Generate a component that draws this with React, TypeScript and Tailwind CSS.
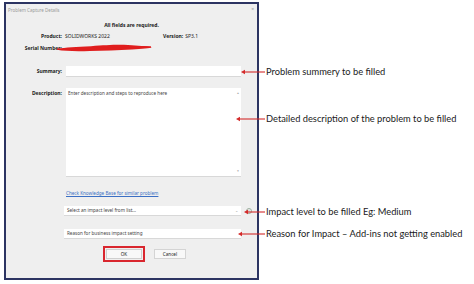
const notes = [
  { top: 66, head: 241, text: 'Problem summery to be filled' },
  { top: 113, head: 236, text: 'Detailed description of the problem to be filled' },
  { top: 206, head: 244, text: 'Impact level to be filled Eg: Medium' },
  { top: 228, head: 238, text: 'Reason for Impact \u2013 Add-ins not getting enabled' },
]

function Arrow({ from }: { from: number }) {
  const len = 265 - from
  return (
    <svg width={len} height="6" viewBox={`0 0 ${len} 6`} className="flex-shrink-0">
      <line x1="2" y1="3" x2={len} y2="3" stroke="#d42a2a" strokeWidth="1.1" />
      <path d="M0 3 L4 0.8 L4 5.2 Z" fill="#d42a2a" />
    </svg>
  )
}

export default function App() {
  return (
    <div className="relative w-[474px] h-[284px] bg-white overflow-hidden"
         style={{ fontFamily: '"Noto Sans", "Open Sans", sans-serif' }}>

      {/* Dialog */}
      <div className="ml-[4px] mt-[2px] w-[255px] h-[278px] border-2 border-[#2c3462]
                      bg-[#efefef] flex flex-col text-[#222]">

        {/* Title bar */}
        <div className="h-[12px] flex items-center justify-between pl-[2px] pr-[3px]">
          <span className="text-[4.5px] text-[#9a9a9a]">Problem Capture Details</span>
          <span className="text-[5px] text-[#9a9a9a]">×</span>
        </div>

        <p className="mt-[5px] text-center text-[5px] font-bold leading-[8px]">
          All fields are required.
        </p>

        {/* Product / Version */}
        <div className="mt-[4px] flex items-center h-[8px] text-[5px]">
          <span className="w-[56px] text-right font-bold">Product:</span>
          <span className="ml-[3px] w-[98px]">SOLIDWORKS 2022</span>
          <span className="font-bold">Version:</span>
          <span className="ml-[2px]">SP3.1</span>
        </div>

        {/* Serial */}
        <div className="mt-[4px] flex items-center h-[8px] text-[5px] relative">
          <span className="w-[56px] text-right font-bold">Serial Number:</span>
          <svg className="absolute left-[50px] top-[-3px]" width="100" height="12" viewBox="0 0 100 12">
            <path d="M1 6.5 C10 5.5 20 5 35 4.2 C50 3.2 60 2.5 72 3 C82 3.4 90 4.5 96 5.2
                     C94 6.2 86 7 76 7.4 C62 8 48 8.6 34 9 C20 9.4 9 9.2 1 7.8 Z"
                  fill="#e01e1e" />
            <path d="M40 5 C55 4 70 4.5 95 5" stroke="#e01e1e" strokeWidth="1.4" fill="none" />
          </svg>
        </div>

        {/* Summary */}
        <div className="mt-[13px] flex items-center">
          <span className="w-[56px] text-right text-[5px] font-bold">Summary:</span>
          <div className="ml-[4px] w-[175px] h-[11px] bg-white border-b border-[#d8d8d8]" />
        </div>

        {/* Description */}
        <div className="mt-[11px] flex items-start">
          <span className="w-[56px] text-right text-[5px] font-bold mt-[2px]">Description:</span>
          <div className="ml-[4px] w-[175px] h-[89px] bg-white border-b border-[#d8d8d8] flex">
            <span className="flex-1 pl-[2px] pt-[2px] text-[4.6px] text-[#444]">
              Enter description and steps to reproduce here
            </span>
            <div className="w-[6px] flex flex-col justify-between items-center py-[3px] text-[3px] text-[#aaa]">
              <span>▲</span>
              <span>▼</span>
            </div>
          </div>
        </div>

        {/* Link */}
        <p className="mt-[13px] ml-[60px] text-[4.6px] text-[#3b6fc4] underline leading-[6px]">
          Check Knowledge Base for similar problem
        </p>

        {/* Impact select */}
        <div className="mt-[10px] ml-[58px] flex items-center">
          <div className="w-[177px] h-[10px] bg-white border-b border-[#d8d8d8] flex items-center justify-between px-[3px]">
            <span className="text-[4.6px] text-[#444]">Select an impact level from list...</span>
            <span className="text-[4px] text-[#999]">⌄</span>
          </div>
          <div className="ml-[5px] w-[6px] h-[6px] rounded-full border border-[#9bb0a0]
                          flex items-center justify-center text-[3.5px] text-[#7a927e]">
            i
          </div>
        </div>

        {/* Reason */}
        <div className="mt-[13px] ml-[58px] w-[177px] h-[10px] bg-white border-b border-[#d8d8d8] flex items-center px-[3px]">
          <span className="text-[4.6px] text-[#444]">Reason for business impact setting</span>
        </div>

        {/* Buttons */}
        <div className="mt-[7px] ml-[97px] flex items-center gap-[9px]">
          <div className="w-[42px] h-[16px] border-2 border-[#d9262e] p-[1px]">
            <div className="w-full h-full bg-[#f8f8f8] border border-[#cfcfcf] flex items-center justify-center text-[4.6px]">
              OK
            </div>
          </div>
          <div className="w-[32px] h-[10px] bg-[#f8f8f8] border border-[#d4d4d4] flex items-center justify-center text-[4.6px]">
            Cancel
          </div>
        </div>
      </div>

      {/* Callouts */}
      {notes.map((n) => (
        <div key={n.text} className="absolute flex items-center h-[12px]"
             style={{ top: n.top, left: n.head }}>
          <Arrow from={n.head} />
          <span className="ml-[1px] whitespace-nowrap text-[9.3px] text-[#1a1a1a]"
                style={{ fontFamily: 'Lato, "Liberation Sans", sans-serif' }}>
            {n.text}
          </span>
        </div>
      ))}
    </div>
  )
}
